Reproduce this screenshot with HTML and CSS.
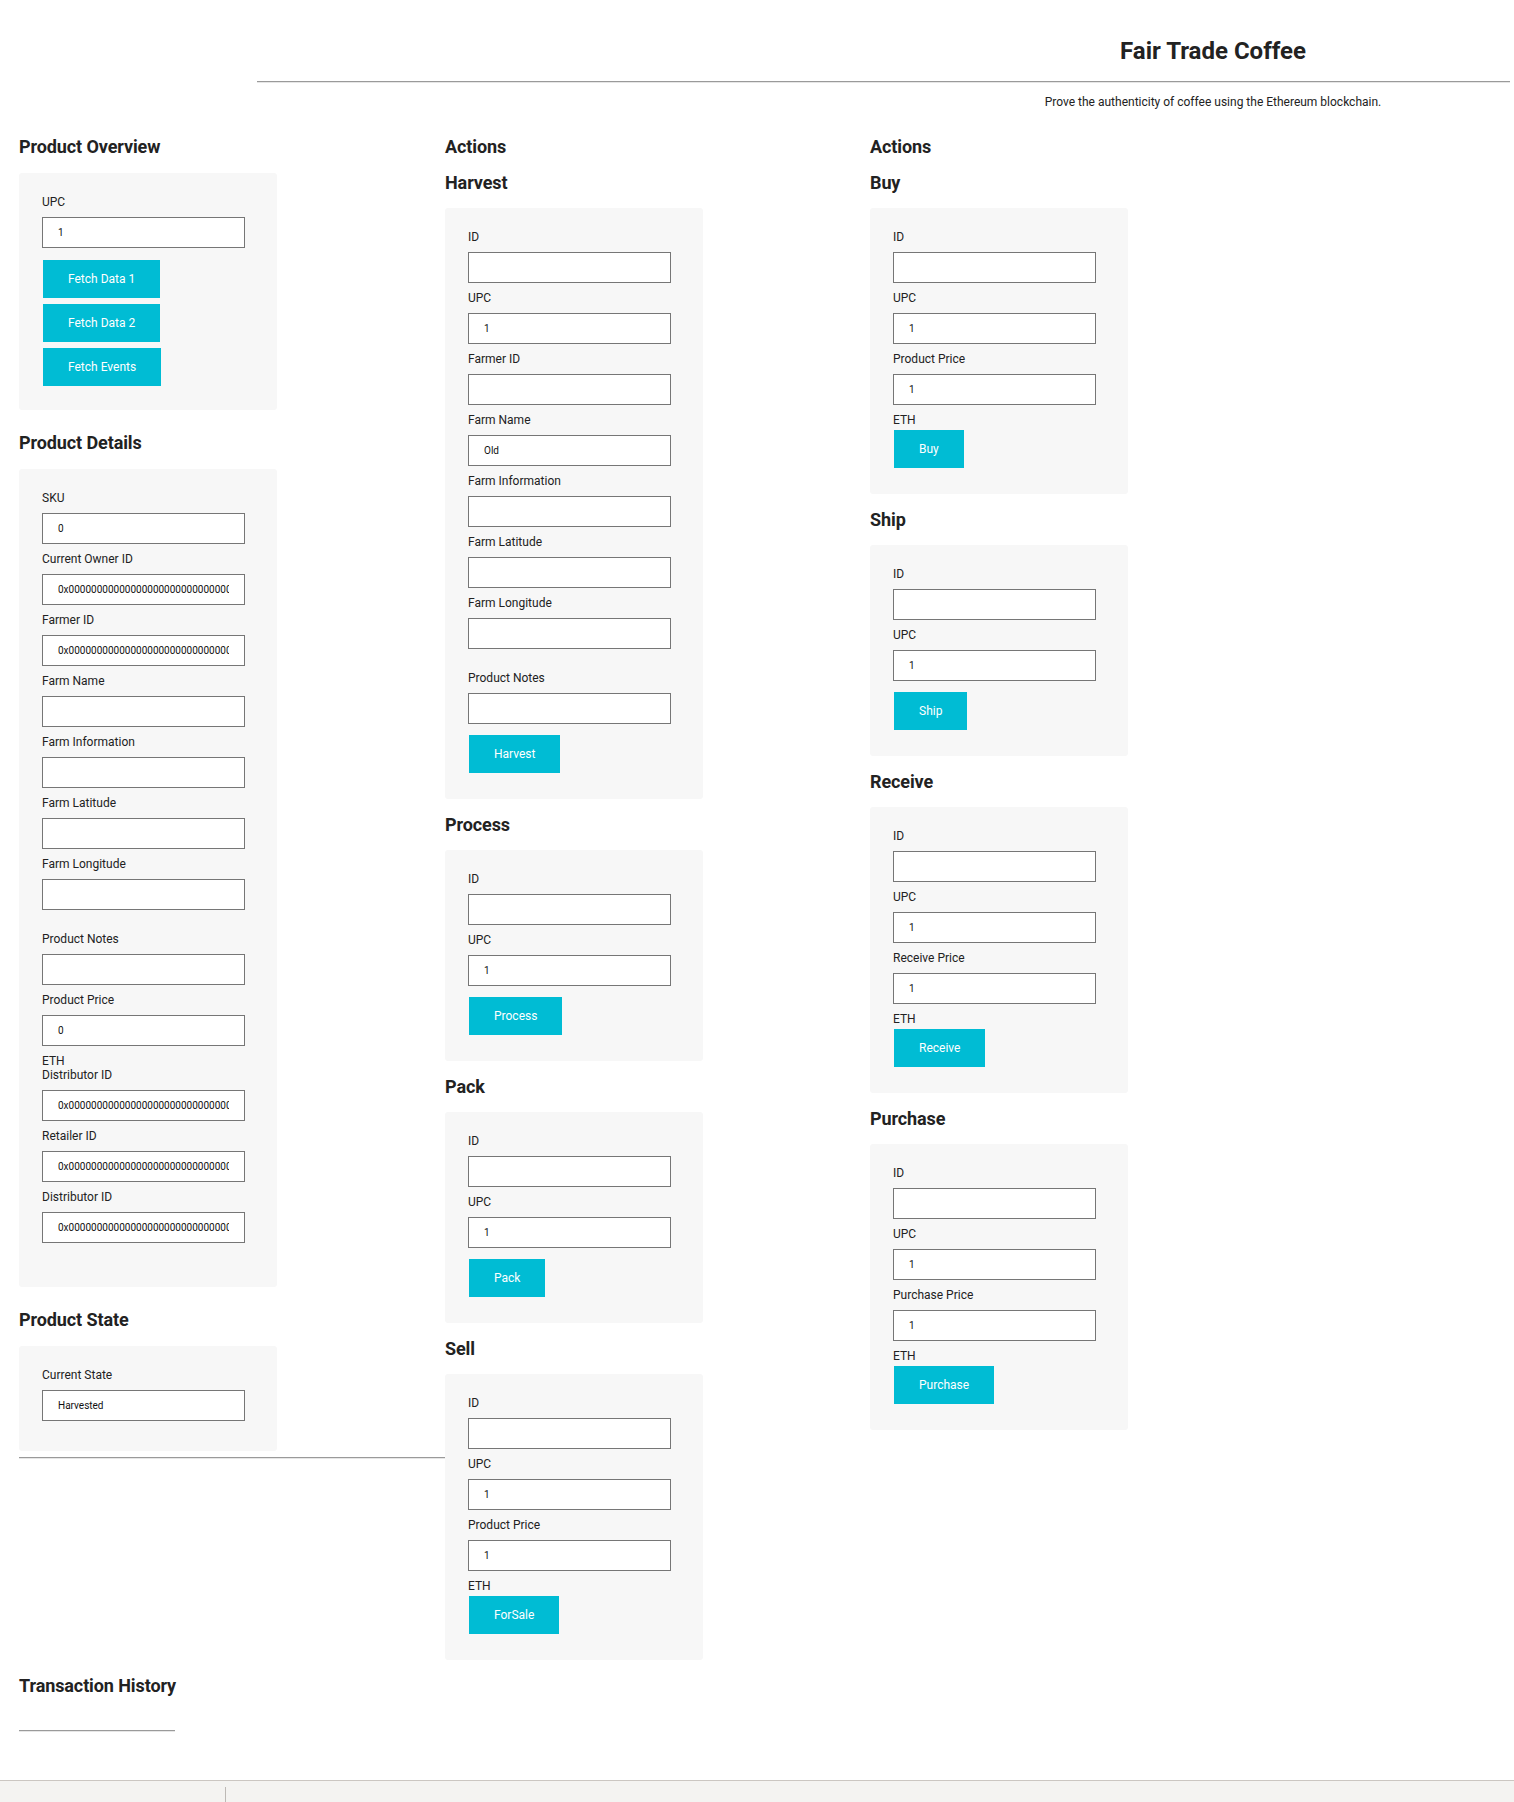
FILE: index.html
```html
<!DOCTYPE html>
<html lang="en">
<head>
<meta charset="utf-8">
<title>Fair Trade Coffee</title>
<link rel="stylesheet" href="styles.css">
</head>
<body>
<header class="header">
  <div class="title-row"><h1 class="title">Fair Trade Coffee</h1></div>
  <hr class="rule">
  <div class="subtitle-row"><p class="subtitle">Prove the authenticity of coffee using the Ethereum blockchain.</p></div>
</header>

<main class="columns">
  <section class="col col-left">
    <h2 class="h first">Product Overview</h2>
    <div class="card card-overview">
      <label>UPC</label>
      <input type="text" value="1">
      <div class="btn-stack">
        <button class="btn">Fetch Data 1</button>
        <button class="btn">Fetch Data 2</button>
        <button class="btn">Fetch Events</button>
      </div>
    </div>

    <h2 class="h">Product Details</h2>
    <div class="card">
      <label>SKU</label>
      <input type="text" value="0">
      <label>Current Owner ID</label>
      <input type="text" value="0x0000000000000000000000000000000000000000">
      <label>Farmer ID</label>
      <input type="text" value="0x0000000000000000000000000000000000000000">
      <label>Farm Name</label>
      <input type="text" value="">
      <label>Farm Information</label>
      <input type="text" value="">
      <label>Farm Latitude</label>
      <input type="text" value="">
      <label>Farm Longitude</label>
      <input type="text" value="">
      <div class="blank"></div>
      <label>Product Notes</label>
      <input type="text" value="">
      <label>Product Price</label>
      <input type="text" value="0">
      <span class="eth">ETH</span>
      <label>Distributor ID</label>
      <input type="text" value="0x0000000000000000000000000000000000000000">
      <label>Retailer ID</label>
      <input type="text" value="0x0000000000000000000000000000000000000000">
      <label>Distributor ID</label>
      <input type="text" value="0x0000000000000000000000000000000000000000">
      <div class="blank tail"></div>
    </div>

    <h2 class="h">Product State</h2>
    <div class="card">
      <label>Current State</label>
      <input type="text" value="Harvested">
    </div>
    <hr class="col-rule">
  </section>

  <section class="col col-mid">
    <h2 class="h first">Actions</h2>
    <h3 class="h sub">Harvest</h3>
    <div class="card">
      <label>ID</label>
      <input type="text" value="">
      <label>UPC</label>
      <input type="text" value="1">
      <label>Farmer ID</label>
      <input type="text" value="">
      <label>Farm Name</label>
      <input type="text" value="Old">
      <label>Farm Information</label>
      <input type="text" value="">
      <label>Farm Latitude</label>
      <input type="text" value="">
      <label>Farm Longitude</label>
      <input type="text" value="">
      <div class="blank"></div>
      <label>Product Notes</label>
      <input type="text" value="">
      <button class="btn">Harvest</button>
    </div>

    <h3 class="h sub">Process</h3>
    <div class="card">
      <label>ID</label>
      <input type="text" value="">
      <label>UPC</label>
      <input type="text" value="1">
      <button class="btn">Process</button>
    </div>

    <h3 class="h sub">Pack</h3>
    <div class="card">
      <label>ID</label>
      <input type="text" value="">
      <label>UPC</label>
      <input type="text" value="1">
      <button class="btn">Pack</button>
    </div>

    <h3 class="h sub">Sell</h3>
    <div class="card">
      <label>ID</label>
      <input type="text" value="">
      <label>UPC</label>
      <input type="text" value="1">
      <label>Product Price</label>
      <input type="text" value="1">
      <span class="eth">ETH</span>
      <button class="btn">ForSale</button>
    </div>
  </section>

  <section class="col col-right">
    <h2 class="h first">Actions</h2>
    <h3 class="h sub">Buy</h3>
    <div class="card">
      <label>ID</label>
      <input type="text" value="">
      <label>UPC</label>
      <input type="text" value="1">
      <label>Product Price</label>
      <input type="text" value="1">
      <span class="eth">ETH</span>
      <button class="btn">Buy</button>
    </div>

    <h3 class="h sub">Ship</h3>
    <div class="card">
      <label>ID</label>
      <input type="text" value="">
      <label>UPC</label>
      <input type="text" value="1">
      <button class="btn">Ship</button>
    </div>

    <h3 class="h sub">Receive</h3>
    <div class="card">
      <label>ID</label>
      <input type="text" value="">
      <label>UPC</label>
      <input type="text" value="1">
      <label>Receive Price</label>
      <input type="text" value="1">
      <span class="eth">ETH</span>
      <button class="btn">Receive</button>
    </div>

    <h3 class="h sub">Purchase</h3>
    <div class="card">
      <label>ID</label>
      <input type="text" value="">
      <label>UPC</label>
      <input type="text" value="1">
      <label>Purchase Price</label>
      <input type="text" value="1">
      <span class="eth">ETH</span>
      <button class="btn">Purchase</button>
    </div>
  </section>
</main>

<section class="history">
  <h2 class="h">Transaction History</h2>
  <hr class="history-rule">
</section>

<footer class="footer">
  <div class="footer-left"></div>
  <div class="footer-right"></div>
</footer>
</body>
</html>
```

FILE: styles.css
```css
html, body {
  margin: 0;
  padding: 0;
}

body {
  font-family: Roboto, "Liberation Sans", Arial, sans-serif;
  color: #222;
  background: #fff;
}

/* Header */
.header {
  padding-top: 37px;
}

.title-row,
.subtitle-row {
  display: flex;
  justify-content: flex-end;
}

.title {
  width: 602px;
  margin: 0;
  text-align: center;
  font-size: 24px;
  line-height: 28px;
  font-weight: 700;
  color: #222;
}

.rule {
  margin: 16px 4px 0 257px;
  height: 0;
  border: 0;
  border-top: 1px solid #9a9a9a;
  border-bottom: 1px solid #e6e6e6;
}

.subtitle {
  width: 602px;
  margin: 12px 0 0 0;
  text-align: center;
  font-size: 12px;
  line-height: 14px;
  color: #222;
}

/* Columns */
.columns {
  display: grid;
  grid-template-columns: 426px 425px 425px;
  align-items: start;
  padding-left: 19px;
  margin-top: 27px;
}

.col {
  display: flex;
  flex-direction: column;
  align-items: flex-start;
}

.h {
  margin: 22px 0 16px 0;
  font-size: 18px;
  line-height: 21px;
  font-weight: 700;
  color: #222;
  letter-spacing: -0.1px;
}

.h.first {
  margin-top: 0;
}

.col-mid .h,
.col-right .h {
  margin: 15px 0 15px 0;
}

.col-mid .h.first,
.col-right .h.first {
  margin: 0;
}

/* Cards */
.card {
  width: 258px;
  box-sizing: border-box;
  background: #f7f7f7;
  border-radius: 3px;
  padding: 14px 0 22px 23px;
  display: flex;
  flex-direction: column;
  align-items: flex-start;
}

.card label {
  display: block;
  font-size: 12px;
  line-height: 14px;
  margin: 8px 0 8px 0;
  color: #222;
}

.card input {
  width: 203px;
  height: 31px;
  box-sizing: border-box;
  margin: 0;
  padding: 0 15px;
  border: 1px solid #767676;
  border-radius: 0;
  background: #fff;
  font-family: Roboto, "Liberation Sans", Arial, sans-serif;
  font-size: 10px;
  color: #111;
  outline: none;
}

.card > input:last-child {
  margin-bottom: 8px;
}

.eth {
  display: block;
  font-size: 12px;
  line-height: 14px;
  margin-top: 8px;
  color: #222;
}

.eth + label {
  margin-top: 0;
}

.blank {
  height: 14px;
}

.blank.tail {
  height: 14px;
  margin-top: 8px;
}

.btn {
  display: block;
  background: #00bcd4;
  color: #fff;
  border: 0;
  border-radius: 0;
  font-family: Roboto, "Liberation Sans", Arial, sans-serif;
  font-size: 12px;
  line-height: 14px;
  padding: 12px 25px;
  margin: 11px 0 4px 1px;
  cursor: pointer;
}

.eth + .btn {
  margin-top: 3px;
}

.btn-stack {
  display: flex;
  flex-direction: column;
  align-items: flex-start;
  gap: 6px;
  margin-top: 12px;
  margin-bottom: 2px;
}

.btn-stack .btn {
  margin: 0 0 0 1px;
}

.col-rule {
  align-self: stretch;
  margin: 6px 0 0 0;
  height: 0;
  border: 0;
  border-top: 1px solid #9a9a9a;
  border-bottom: 1px solid #e6e6e6;
}

/* History */
.history {
  padding-left: 19px;
}

.history .h {
  margin: 15px 0 0 0;
}

.history-rule {
  width: 156px;
  margin: 34px 0 0 0;
  height: 0;
  border: 0;
  border-top: 1px solid #9a9a9a;
  border-bottom: 1px solid #e6e6e6;
}

/* Footer bar */
.footer {
  margin-top: 48px;
  height: 21px;
  background: #f4f3f1;
  border-top: 1px solid #cbc6c1;
  display: flex;
}

.footer-left {
  width: 225px;
}

.footer-right {
  flex: 1;
  margin-top: 6px;
  border-left: 1px solid #bdb9b5;
}
```
